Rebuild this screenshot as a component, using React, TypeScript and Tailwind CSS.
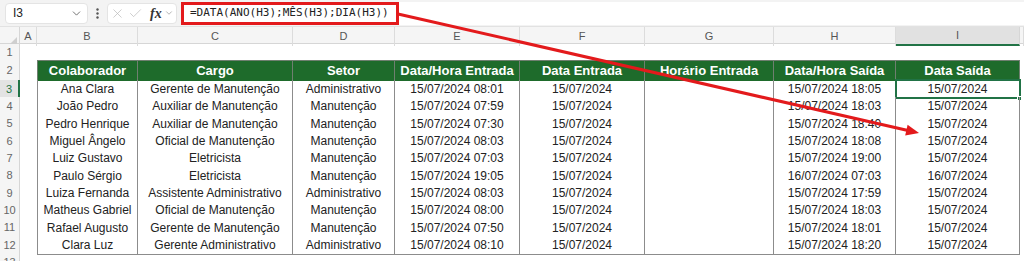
import { Check, ChevronDown, X } from "lucide-react";

const COLS =
  "grid grid-cols-[20px_17px_101px_155px_102px_125px_125px_129px_122px_124px_1fr]";

const letters = ["A", "B", "C", "D", "E", "F", "G", "H", "I", ""];

const headers = [
  "Colaborador",
  "Cargo",
  "Setor",
  "Data/Hora Entrada",
  "Data Entrada",
  "Horário Entrada",
  "Data/Hora Saída",
  "Data Saída",
];

const rows = [
  ["Ana Clara", "Gerente de Manutenção", "Administrativo", "15/07/2024 08:01", "15/07/2024", "", "15/07/2024 18:05", "15/07/2024"],
  ["João Pedro", "Auxiliar de Manutenção", "Manutenção", "15/07/2024 07:59", "15/07/2024", "", "15/07/2024 18:03", "15/07/2024"],
  ["Pedro Henrique", "Auxiliar de Manutenção", "Manutenção", "15/07/2024 07:30", "15/07/2024", "", "15/07/2024 18:40", "15/07/2024"],
  ["Miguel Ângelo", "Oficial de Manutenção", "Manutenção", "15/07/2024 08:03", "15/07/2024", "", "15/07/2024 18:08", "15/07/2024"],
  ["Luiz Gustavo", "Eletricista", "Manutenção", "15/07/2024 07:03", "15/07/2024", "", "15/07/2024 19:00", "15/07/2024"],
  ["Paulo Sérgio", "Eletricista", "Manutenção", "15/07/2024 19:05", "15/07/2024", "", "16/07/2024 07:03", "16/07/2024"],
  ["Luiza Fernanda", "Assistente Administrativo", "Administrativo", "15/07/2024 08:03", "15/07/2024", "", "15/07/2024 17:59", "15/07/2024"],
  ["Matheus Gabriel", "Oficial de Manutenção", "Manutenção", "15/07/2024 08:00", "15/07/2024", "", "15/07/2024 18:03", "15/07/2024"],
  ["Rafael Augusto", "Gerente de Manutenção", "Manutenção", "15/07/2024 07:50", "15/07/2024", "", "15/07/2024 18:01", "15/07/2024"],
  ["Clara Luz", "Gerente Administrativo", "Administrativo", "15/07/2024 08:10", "15/07/2024", "", "15/07/2024 18:20", "15/07/2024"],
];

const RowHead = ({ n, active }: { n: number; active?: boolean }) => (
  <div
    className={
      active
        ? "flex items-center justify-center bg-[#e3e3e3] border-r-2 border-[#217346] text-[11px] text-[#217346]"
        : "flex items-center justify-center bg-[#f5f5f5] border-r border-[#d6d6d6] text-[11px] text-[#666]"
    }
  >
    {n}
  </div>
);

const FormulaBar = () => (
  <div className="h-[27px] bg-[#f3f3f3] flex items-center pl-[5px] border-b border-[#e2e2e2]">
    <div className="w-[83px] h-[21px] bg-white rounded-[4px] border border-[#e4e4e4] flex items-center justify-between pl-[7px] pr-[4px]">
      <span className="text-[12px] text-[#222]">I3</span>
      <ChevronDown size={13} strokeWidth={1.5} className="text-[#555]" />
    </div>
    <div className="w-[19px] flex justify-center">
      <svg width="3" height="11" viewBox="0 0 3 11">
        <circle cx="1.5" cy="1.5" r="1.2" fill="#555" />
        <circle cx="1.5" cy="5.5" r="1.2" fill="#555" />
        <circle cx="1.5" cy="9.5" r="1.2" fill="#555" />
      </svg>
    </div>
    <div className="w-[70px] h-[21px] bg-white rounded-[4px] border border-[#e4e4e4] flex items-center pl-[2px]">
      <X size={15} strokeWidth={1.1} className="text-[#b8b8b8]" />
      <Check size={15} strokeWidth={1.1} className="ml-[3px] text-[#b8b8b8]" />
      <span className="ml-[7px] text-[14px] italic font-bold text-[#333] [font-family:'Liberation_Serif',serif]">
        fx
      </span>
      <ChevronDown size={10} strokeWidth={1.5} className="ml-[2px] text-[#888]" />
    </div>
    <div className="flex-1 h-[23px] ml-[4px] bg-white flex items-center">
      <div className="h-[23px] w-[218px] border-[3px] border-[#e31a1c] flex items-center pl-[6px] text-[11px] text-[#222] [font-family:'DejaVu_Sans_Mono',monospace]">
        =DATA(ANO(H3);MÊS(H3);DIA(H3))
      </div>
    </div>
  </div>
);

const ColumnHeaders = () => (
  <div className={`${COLS} h-[17px] bg-[#f5f5f5] border-b border-[#d6d6d6]`}>
    <div className="border-r border-[#d6d6d6] flex items-end justify-end p-[2px]">
      <svg width="7" height="7" viewBox="0 0 7 7">
        <polygon points="7,0 7,7 0,7" fill="#cfcfcf" />
      </svg>
    </div>
    {letters.map((l, i) => (
      <div
        key={i}
        className={
          l === "I"
            ? "flex items-center justify-center bg-[#e1e1e1] border-b-2 border-[#217346] border-r border-r-[#d6d6d6] text-[11px] text-[#555]"
            : "flex items-center justify-center border-r border-[#dcdcdc] text-[11px] text-[#555]"
        }
      >
        {l}
      </div>
    ))}
  </div>
);

export default function App() {
  return (
    <div className="relative w-[1024px] h-[261px] overflow-hidden bg-white [font-family:'Liberation_Sans',Arial,sans-serif]">
      <FormulaBar />
      <ColumnHeaders />

      <div className={`${COLS} h-[16px]`}>
        <RowHead n={1} />
      </div>

      <div className={`${COLS} h-[20px]`}>
        <RowHead n={2} />
        <div />
        {headers.map((h, i) => (
          <div
            key={h}
            className={
              i === 0
                ? "flex items-center justify-center bg-[#1e6b2b] border-l border-t border-r border-[#6f7f70] text-[13px] font-bold text-white whitespace-nowrap"
                : "flex items-center justify-center bg-[#1e6b2b] border-t border-r border-[#6f7f70] text-[13px] font-bold text-white whitespace-nowrap"
            }
          >
            {h}
          </div>
        ))}
      </div>

      {rows.map((r, ri) => (
        <div key={ri} className={`${COLS} h-[17.33px]`}>
          <RowHead n={ri + 3} active={ri === 0} />
          <div />
          {r.map((c, ci) => (
            <div
              key={ci}
              className={[
                "relative flex items-center justify-center border-r border-[#8c8c8c] text-[12px] text-[#222] whitespace-nowrap",
                ci === 0 ? "border-l" : "",
                ri === rows.length - 1 ? "border-b" : "",
                ri === 0 && ci === 7 ? "outline-2 outline-[#217346] -outline-offset-1" : "",
              ].join(" ")}
            >
              {c}
              {ri === 0 && ci === 7 && (
                <span className="absolute -right-[3px] -bottom-[3px] w-[5px] h-[5px] bg-[#217346] border border-white" />
              )}
            </div>
          ))}
        </div>
      ))}

      <div className={`${COLS} h-[17px]`}>
        <RowHead n={13} />
      </div>

      <svg
        className="absolute inset-0 pointer-events-none"
        width="1024"
        height="261"
        viewBox="0 0 1024 261"
      >
        <line x1="398" y1="14" x2="908" y2="130.5" stroke="#e31a1c" strokeWidth="3" />
        <polygon points="919,133 905.2,135.5 907.6,124.8" fill="#e31a1c" />
      </svg>
    </div>
  );
}
